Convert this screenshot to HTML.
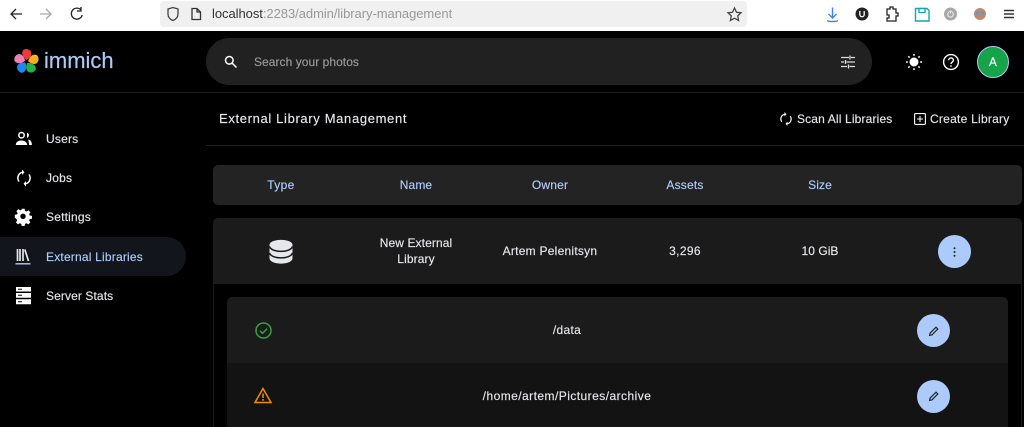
<!DOCTYPE html>
<html><head><meta charset="utf-8"><style>
html,body{margin:0;padding:0;width:1024px;height:427px;overflow:hidden;background:#000}
body{position:relative;font-family:"Liberation Sans",sans-serif;color:#e5e7eb}
.a{position:absolute}
.t{position:absolute;white-space:nowrap;font-size:12px;line-height:16px;letter-spacing:.2px;transform:translate(-50%,-50%);-webkit-text-stroke:.15px currentColor}
.l{position:absolute;white-space:nowrap;font-size:12px;line-height:16px;letter-spacing:.2px;transform:translateY(-50%);-webkit-text-stroke:.15px currentColor}
svg{position:absolute;overflow:visible}
.h{color:#adcbfa}
.btn{position:absolute;width:33px;height:33px;border-radius:50%;background:#adcbfa}
</style></head><body>
<!-- browser bar -->
<div class="a" style="left:0;top:0;width:1024px;height:31px;background:#fff"></div>
<div class="a" style="left:160px;top:1px;width:587px;height:26px;background:#f0f0f0;border-radius:4px"></div>
<svg style="left:0;top:0" width="1024" height="31" fill="none" stroke="#222" stroke-width="1.300">
<path d="M11 14h11M16 9l-5 5 5 5"/>
<path d="M40 14h11M46 9l5 5-5 5" stroke="#aaa"/>
<path d="M81 10a5.500 5.500 0 1 0 1.200 5M81 7v4h-4"/>
<path d="M168 9l5-1.500 5 1.500v5c0 4-2.500 5.500-5 6.500-2.500-1-5-2.500-5-6.500z" stroke="#444"/>
<path d="M192 8.500h5l3.500 3.500v7.500h-8.500zM197 8.500v3.500h3.500" stroke="#333"/>
<path d="M734.500 8l2 4.300 4.500.5-3.300 3.100.9 4.600-4.100-2.300-4.100 2.300.9-4.600-3.300-3.100 4.500-.5z" stroke="#444"/>
<path d="M832.500 7.500v10M828.500 14l4 4 4-4M827 20.500c1 .8 2 1 5.500 1s4.500-.2 5.500-1" stroke="#3d84e8" stroke-width="1.400"/>
<circle cx="862" cy="14" r="6.500" fill="#222" stroke="none"/>
<path d="M859.800 11v3.500c0 3 4.400 3 4.400 0V11" stroke="#fff" stroke-width="1.300"/>
<path d="M887 9h3v-2h3v2h3v4h2v3h-2v5h-9v-3h2v-3h-2z" stroke="#222"/>
<path d="M915.500 8.500h11.500l2 2v10.500h-13.500z" stroke="#14a8ad" stroke-width="1.400"/>
<path d="M919 8.500h6v4h-6z" stroke="#14a8ad"/>
<circle cx="950.500" cy="14" r="6.500" fill="#a8a8a8" stroke="none"/>
<circle cx="950.500" cy="14.300" r="2.800" stroke="#eee" stroke-width="1"/>
<path d="M950.500 10.500v3" stroke="#eee" stroke-width="1"/>
<circle cx="980" cy="14" r="6" fill="#c08a6a" stroke="none"/>
<circle cx="977.500" cy="13" r="1.700" fill="#5b9bd5" stroke="none"/>
<circle cx="982.500" cy="13" r="1.700" fill="#5b9bd5" stroke="none"/>
<path d="M1004 10.500h10M1004 14h10M1004 17.500h10" stroke="#333" stroke-width="1.400"/>
</svg>
<div class="l" style="left:212px;top:14px;font-size:13px;color:#999;letter-spacing:-.05px;-webkit-text-stroke:0"><span style="color:#333">localhost</span>:2283/admin/library-management</div>

<!-- navbar -->
<div class="a" style="left:0;top:92px;width:1024px;height:1px;background:#1f1f1f"></div>
<div class="a" style="left:206px;top:38px;width:666px;height:47px;background:#212121;border-radius:24px"></div>
<svg style="left:14px;top:49px" width="26" height="26" viewBox="0 0 26 26">
<g transform="translate(12.500 12.500)">
<path d="M.5-1.500C-3-4.500-4.500-9-1.500-12C2-13.500 6.500-11 6-7C5.500-4.500 3-2.500 .5-1.500z" fill="#f03a3a" transform="rotate(-8)"/>
<path d="M.5-1.500C-3-4.500-4.500-9-1.500-12C2-13.500 6.500-11 6-7C5.500-4.500 3-2.500 .5-1.500z" fill="#fbb117" transform="rotate(64)"/>
<path d="M.5-1.500C-3-4.500-4.500-9-1.500-12C2-13.500 6.500-11 6-7C5.500-4.500 3-2.500 .5-1.500z" fill="#24b24b" transform="rotate(136)"/>
<path d="M.5-1.500C-3-4.500-4.500-9-1.500-12C2-13.500 6.500-11 6-7C5.500-4.500 3-2.500 .5-1.500z" fill="#1e88ee" transform="rotate(208)"/>
<path d="M.5-1.500C-3-4.500-4.500-9-1.500-12C2-13.500 6.500-11 6-7C5.500-4.500 3-2.500 .5-1.500z" fill="#ee7fb4" transform="rotate(280)"/>
</g>
</svg>
<div class="l" style="left:44px;top:61px;font-size:22px;color:#adcbfa;letter-spacing:0;line-height:24px">immich</div>
<svg style="left:224px;top:55px" width="14" height="14" fill="none" stroke="#fff" stroke-width="1.500"><circle cx="5.300" cy="5.300" r="3.800"/><path d="M8.200 8.200L12.500 12.500"/></svg>
<div class="l" style="left:254px;top:62px;color:#9a9a9a;letter-spacing:.05px">Search your photos</div>
<svg style="left:841px;top:55px" width="14" height="14" fill="none" stroke="#ddd" stroke-width="1.300"><path d="M0 2.500h8M10 2.500h4M0 7h3M5.500 7h8.500M0 11.500h6M8.500 11.500h5.500M9 .5v4M4.500 5v4M7.500 9.500v4"/></svg>
<svg style="left:906px;top:54px" width="16" height="16" fill="#fff" stroke="#fff"><circle cx="8" cy="8" r="4"/><path d="M8 0v1.800M8 14.200V16M0 8h1.800M14.200 8H16M2.300 2.300l1.300 1.300M12.400 12.400l1.300 1.300M13.700 2.300l-1.300 1.300M3.600 12.400l-1.300 1.300" stroke-width="1.500" fill="none"/></svg>
<svg style="left:942px;top:53px" width="18" height="18" fill="none" stroke="#fff" stroke-width="1.400"><circle cx="9" cy="9" r="7.400"/><path d="M6.700 7.200c0-3 4.700-3 4.700 0 0 1.800-2.400 1.900-2.400 3.800"/><path d="M9 12.300v1.500"/></svg>
<div class="a" style="left:977px;top:46px;width:30px;height:30px;border-radius:50%;background:#16a34a;border:1px solid #adcbfa"></div>
<div class="t" style="left:993px;top:62px;color:#fff">A</div>

<!-- sidebar -->
<div class="a" style="left:0;top:237px;width:186px;height:39px;background:#12161c;border-radius:0 20px 20px 0"></div>
<svg style="left:15px;top:131px" width="18" height="16" fill="#fff"><circle cx="6.500" cy="4.200" r="2.700" fill="none" stroke="#fff" stroke-width="1.500"/><path d="M12 1.600a2.800 2.800 0 0 1 0 5.300zM.8 14c0-6 11-6 11.500 0zM13 8.500c3 .5 3.800 2.500 3.900 5.500H14c0-2-.2-3.700-1-5.500z"/></svg>
<svg style="left:16px;top:169px" width="16" height="18" fill="none" stroke="#fff" stroke-width="1.500"><path d="M3 12.500A6 6 0 0 1 6 3.300M13 5.500a6 6 0 0 1-3 9.200"/><path d="M6 .5v5.500l2.500-2.700zM10 17.500v-5.500l-2.500 2.700z" fill="#fff" stroke="none"/></svg>
<svg style="left:15px;top:209px" width="16" height="16" viewBox="0 0 16 16"><path d="M6.500 0h3l.4 2.200 1.500.7 2-1.200 2 2.200-1.300 1.800.6 1.500 2.300.4v3l-2.300.4-.6 1.500 1.300 1.800-2 2.200-2-1.200-1.500.7-.4 2.200h-3l-.4-2.200-1.500-.7-2 1.200-2-2.200 1.300-1.800-.6-1.500L-.5 9.400v-3l2.300-.4.600-1.500L1.100 2.700l2-2.200 2 1.200 1.500-.7z" fill="#fff" transform="translate(.3 -.3) scale(.98 .95)"/><circle cx="8" cy="7.300" r="2.700" fill="#000"/></svg>
<svg style="left:15px;top:248px" width="16" height="18" stroke="#e6e6e6" fill="none"><path d="M2.500 1v12M5 1v12M8 1v12" stroke-width="1.700"/><path d="M9.800 1.500l3.700 11.500" stroke-width="1.700"/><path d="M.5 15.800h15" stroke-width="1.400" stroke="#adcbfa"/></svg>
<svg style="left:16px;top:287px" width="15" height="18" fill="#fff"><path d="M0 0h15v4.500H0zM0 6h15v4.800H0zM0 12.300h15v5H0z"/><path d="M2 1.700h4v1H2zM2 7.800h4v1H2zM2 14.300h4v1H2z" fill="#000"/></svg>
<div class="l" style="left:46px;top:139px">Users</div>
<div class="l" style="left:46px;top:178px">Jobs</div>
<div class="l" style="left:46px;top:217px">Settings</div>
<div class="l h" style="left:46px;top:257px">External Libraries</div>
<div class="l" style="left:46px;top:296px;letter-spacing:.1px">Server Stats</div>

<!-- header -->
<div class="a" style="left:206px;top:145px;width:818px;height:1px;background:#1f1f1f"></div>
<div class="l" style="left:219px;top:119px;font-size:13px;letter-spacing:.65px">External Library Management</div>
<svg style="left:780px;top:112px" width="12" height="14" fill="none" stroke="#fff" stroke-width="1.200"><path d="M1.800 9.800A4.800 4.800 0 0 1 4.500 2.300M10.200 4.200a4.800 4.800 0 0 1-2.700 7.500"/><path d="M4.500 0v4.500l2-2.200zM7.500 14V9.500l-2 2.200z" fill="#fff" stroke="none"/></svg>
<div class="l" style="left:797px;top:119px;letter-spacing:.15px">Scan All Libraries</div>
<svg style="left:914px;top:113px" width="12" height="12" fill="none" stroke="#fff" stroke-width="1.100"><rect x=".6" y=".6" width="10.800" height="10.800" rx="1"/><path d="M6 3v6M3 6h6"/></svg>
<div class="l" style="left:930px;top:119px;letter-spacing:.25px">Create Library</div>

<!-- table -->
<div class="a" style="left:213px;top:165px;width:809px;height:40px;background:#232323;border-radius:5px"></div>
<div class="t h" style="left:281px;top:185px;letter-spacing:.35px">Type</div>
<div class="t h" style="left:416px;top:185px;letter-spacing:.1px">Name</div>
<div class="t h" style="left:550px;top:185px;letter-spacing:.2px">Owner</div>
<div class="t h" style="left:685px;top:185px;letter-spacing:.2px">Assets</div>
<div class="t h" style="left:820px;top:185px;letter-spacing:.1px">Size</div>

<div class="a" style="left:213px;top:218px;width:809px;height:66px;background:#1b1b1b;border-radius:5px 5px 0 0"></div>
<div class="a" style="left:213px;top:284px;width:809px;height:143px;border-left:1px solid #1b1b1b;border-right:1px solid #1b1b1b;box-sizing:border-box"></div>
<svg style="left:269px;top:239px" width="24" height="25"><path d="M.5 6C.5-.8 23.500-.8 23.500 6V19C23.500 26.500 .5 26.500 .5 19z" fill="#e5e7eb"/><path d="M.5 7.500c2 6.500 21 6.500 23 0M.5 14c2 6.500 21 6.500 23 0" fill="none" stroke="#1b1b1b" stroke-width="1.500"/></svg>
<div class="t" style="left:416px;top:243px;letter-spacing:.1px">New External</div>
<div class="t" style="left:416px;top:259px;letter-spacing:.1px">Library</div>
<div class="t" style="left:550px;top:251px;letter-spacing:.25px">Artem Pelenitsyn</div>
<div class="t" style="left:685px;top:251px;letter-spacing:.35px">3,296</div>
<div class="t" style="left:820px;top:251px;letter-spacing:.05px">10 GiB</div>
<div class="btn" style="left:938px;top:235px"></div>
<svg style="left:953px;top:247px" width="3" height="10" fill="#222"><circle cx="1.500" cy="1.300" r="1"/><circle cx="1.500" cy="5" r="1"/><circle cx="1.500" cy="8.700" r="1"/></svg>

<div class="a" style="left:227px;top:297px;width:781px;height:66px;background:#1b1b1b;border-radius:5px 5px 0 0"></div>
<div class="a" style="left:227px;top:363px;width:781px;height:64px;background:#131313"></div>
<svg style="left:255px;top:322px" width="17" height="17" fill="none" stroke="#34a043" stroke-width="1.500"><circle cx="8.500" cy="8.500" r="7.500"/><path d="M5 8.800l2.500 2.500 4.700-4.700"/></svg>
<svg style="left:254px;top:387px" width="18" height="17" fill="none" stroke="#f08c00" stroke-width="1.500"><path d="M9 1.500L1 15.500h16z"/><path d="M9 6.500v4.500M9 12v1.700"/></svg>
<div class="t" style="left:567px;top:330px;letter-spacing:.3px">/data</div>
<div class="t" style="left:567px;top:396px;letter-spacing:.45px">/home/artem/Pictures/archive</div>
<div class="btn" style="left:917px;top:314px"></div>
<div class="btn" style="left:917px;top:380px"></div>
<svg style="left:929px;top:326px" width="10" height="10" fill="none" stroke="#222" stroke-width="1.200"><path d="M.6 9.400l.5-2.300L7 1.200l1.800 1.800L2.900 8.900z"/></svg>
<svg style="left:929px;top:391px" width="10" height="10" fill="none" stroke="#222" stroke-width="1.200"><path d="M.6 9.400l.5-2.300L7 1.200l1.800 1.800L2.900 8.900z"/></svg>
</body></html>
